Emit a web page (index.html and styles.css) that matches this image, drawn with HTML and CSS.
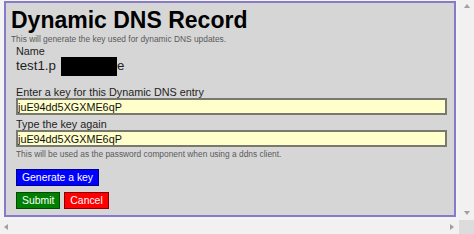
FILE: index.html
```html
<!DOCTYPE html>
<html lang="en">
<head>
    <meta charset="UTF-8">
    <meta name="viewport" content="width=device-width, initial-scale=1.0">
    <title>Dynamic DNS Record</title>
    <link rel="stylesheet" href="styles.css">
</head>
<body>
    <div class="frame">
        <div class="viewport">
            <div class="panel">
                <h1>Dynamic DNS Record</h1>
                <p class="hint">This will generate the key used for dynamic DNS updates.</p>

                <div class="form">
                    <div class="label">Name</div>
                    <div class="record">test1.p<span class="redacted"></span>e</div>

                    <label class="label spaced" for="key1">Enter a key for this Dynamic DNS entry</label>
                    <input type="text" id="key1" value="juE94dd5XGXME6qP">

                    <label class="label tight" for="key2">Type the key again</label>
                    <input type="text" id="key2" value="juE94dd5XGXME6qP">
                    <p class="hint note">This will be used as the password component when using a ddns client.</p>

                    <button class="btn btn-generate">Generate a key</button>

                    <div class="actions">
                        <button class="btn btn-submit">Submit</button>
                        <button class="btn btn-cancel">Cancel</button>
                    </div>
                </div>
            </div>
        </div>

        <div class="vbar">
            <span class="arrow up"></span>
            <span class="arrow down"></span>
        </div>
        <div class="hbar">
            <span class="arrow left"></span>
            <span class="arrow right"></span>
        </div>
        <div class="corner"></div>
    </div>
</body>
</html>
```

FILE: styles.css
```css
* {
    margin: 0;
    padding: 0;
    box-sizing: border-box;
    font-family: 'Liberation Sans', Arial, sans-serif;
}

body {
    background: #fff;
}

.frame {
    width: 474px;
    height: 234px;
    display: grid;
    grid-template-columns: 459px 15px;
    grid-template-rows: 220px 14px;
    overflow: hidden;
}

.viewport {
    background: #f4f4f4;
    padding: 1px 0 0 4px;
    overflow: hidden;
}

.panel {
    width: 452px;
    background: #d6d6d6;
    border: 2px solid #857bc8;
    padding: 4px 7px 6px 5px;
}

h1 {
    font-size: 23px;
    line-height: 27px;
    font-weight: bold;
    color: #000;
}

.hint {
    font-size: 8.4px;
    line-height: 10px;
    color: #5a5a5a;
}

.form {
    padding-left: 5px;
}

.label {
    display: block;
    font-size: 10.8px;
    line-height: 12px;
    color: #1e1e1e;
    margin-top: 1px;
}

.label.spaced {
    margin-top: 13px;
}

.label.tight {
    margin-top: 3px;
}

.record {
    font-size: 13.3px;
    line-height: 16px;
    height: 16px;
    color: #1e1e1e;
}

.redacted {
    display: inline-block;
    width: 56px;
    height: 19px;
    margin-left: 5px;
    background: #000;
    vertical-align: -6px;
}

input[type="text"] {
    display: block;
    width: 431px;
    height: 17px;
    padding: 0 0 0 0;
    background: #ffffcc;
    border: 2px solid #78786c;
    font-size: 10.8px;
    color: #111;
    outline: none;
}

.note {
    margin-top: 2px;
}

.btn {
    height: 17px;
    padding: 0 5px;
    font-size: 10.4px;
    line-height: 15px;
    color: #fff;
    border: 1px solid #333;
    cursor: pointer;
}

.btn-generate {
    display: block;
    margin-top: 10px;
    background: #0000ff;
    border-color: #00008a;
}

.actions {
    display: flex;
    gap: 4px;
    margin-top: 6px;
}

.btn-submit {
    background: #008000;
    border-color: #004a00;
}

.btn-cancel {
    background: #ff0000;
    border-color: #8a0000;
}

.vbar {
    background: #f1f1f1;
    display: flex;
    flex-direction: column;
    justify-content: space-between;
    align-items: center;
    padding: 4px 0 5px;
}

.hbar {
    background: #f1f1f1;
    display: flex;
    justify-content: space-between;
    align-items: center;
    padding: 0 5px 0 4px;
}

.corner {
    background: #dcdcdc;
}

.arrow {
    width: 0;
    height: 0;
    border-style: solid;
    border-color: transparent;
}

.arrow.up {
    border-width: 0 3.5px 4px;
    border-bottom-color: #a0a0a0;
}

.arrow.down {
    border-width: 4px 3.5px 0;
    border-top-color: #a0a0a0;
}

.arrow.left {
    border-width: 3.5px 4px 3.5px 0;
    border-right-color: #a0a0a0;
}

.arrow.right {
    border-width: 3.5px 0 3.5px 4px;
    border-left-color: #a0a0a0;
}
```
